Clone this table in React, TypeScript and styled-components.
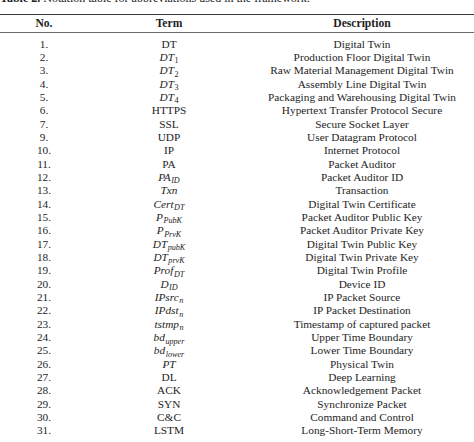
import React from 'react';
import styled, { createGlobalStyle } from 'styled-components';

const GlobalStyle = createGlobalStyle`
	html, body {
		margin: 0;
		padding: 0;
		background: #ffffff;
	}
	body {
		font-family: "Liberation Serif", "DejaVu Serif", serif;
		color: #1e1e1e;
		overflow: hidden;
	}
`;

const Page = styled.div`
	width: 474px;
	height: 442px;
	overflow: hidden;
`;

const Caption = styled.p`
	margin: -9px 0 0 0;
	height: 14px;
	font-size: 12px;
	line-height: 14px;
	white-space: nowrap;
	b {
		font-weight: bold;
	}
`;

const Table = styled.section`
	display: flex;
	flex-flow: column;
	width: 474px;
	margin-top: 9px;
	font-size: 11.3px;
`;

const HeadRow = styled.div`
	display: grid;
	grid-template-columns: 88px 162px 1fr;
	align-items: center;
	height: 17px;
	border-top: 1.5px solid #3a3a3a;
	border-bottom: 1px solid #6a6a6a;
	font-size: 11.6px;
	font-weight: bold;
	text-align: center;
`;

const Body = styled.div`
	display: flex;
	flex-flow: column;
	padding-top: 4.5px;
`;

const BodyRow = styled.div`
	display: grid;
	grid-template-columns: 88px 162px 1fr;
	height: 13.35px;
	line-height: 13.35px;
	text-align: center;
	white-space: nowrap;
`;

const Math = styled.i`
	font-style: italic;
`;

const Sub = styled.span<{ $roman?: boolean }>`
	font-size: 0.72em;
	line-height: 0;
	font-style: ${(p) => (p.$roman ? 'normal' : 'italic')};
	position: relative;
	top: 0.3em;
	margin-left: 0.5px;
`;

type Row = {
	no: string;
	term: React.ReactNode;
	desc: string;
};

const m = (base: string, sub?: string, roman?: boolean) => (
	<Math>
		{base}
		{sub && <Sub $roman={roman}>{sub}</Sub>}
	</Math>
);

const rows: Row[] = [
	{ no: '1.', term: 'DT', desc: 'Digital Twin' },
	{ no: '2.', term: m('DT', '1', true), desc: 'Production Floor Digital Twin' },
	{ no: '3.', term: m('DT', '2', true), desc: 'Raw Material Management Digital Twin' },
	{ no: '4.', term: m('DT', '3', true), desc: 'Assembly Line Digital Twin' },
	{ no: '5.', term: m('DT', '4', true), desc: 'Packaging and Warehousing Digital Twin' },
	{ no: '6.', term: 'HTTPS', desc: 'Hypertext Transfer Protocol Secure' },
	{ no: '7.', term: 'SSL', desc: 'Secure Socket Layer' },
	{ no: '9.', term: 'UDP', desc: 'User Datagram Protocol' },
	{ no: '10.', term: 'IP', desc: 'Internet Protocol' },
	{ no: '11.', term: 'PA', desc: 'Packet Auditor' },
	{ no: '12.', term: m('PA', 'ID'), desc: 'Packet Auditor ID' },
	{ no: '13.', term: m('Txn'), desc: 'Transaction' },
	{ no: '14.', term: m('Cert', 'DT'), desc: 'Digital Twin Certificate' },
	{ no: '15.', term: m('P', 'PubK'), desc: 'Packet Auditor Public Key' },
	{ no: '16.', term: m('P', 'PrvK'), desc: 'Packet Auditor Private Key' },
	{ no: '17.', term: m('DT', 'pubK'), desc: 'Digital Twin Public Key' },
	{ no: '18.', term: m('DT', 'prvK'), desc: 'Digital Twin Private Key' },
	{ no: '19.', term: m('Prof', 'DT'), desc: 'Digital Twin Profile' },
	{ no: '20.', term: m('D', 'ID'), desc: 'Device ID' },
	{ no: '21.', term: m('IPsrc', 'n'), desc: 'IP Packet Source' },
	{ no: '22.', term: m('IPdst', 'n'), desc: 'IP Packet Destination' },
	{ no: '23.', term: m('tstmp', 'n'), desc: 'Timestamp of captured packet' },
	{ no: '24.', term: m('bd', 'upper'), desc: 'Upper Time Boundary' },
	{ no: '25.', term: m('bd', 'lower'), desc: 'Lower Time Boundary' },
	{ no: '26.', term: m('PT'), desc: 'Physical Twin' },
	{ no: '27.', term: 'DL', desc: 'Deep Learning' },
	{ no: '28.', term: 'ACK', desc: 'Acknowledgement Packet' },
	{ no: '29.', term: 'SYN', desc: 'Synchronize Packet' },
	{ no: '30.', term: 'C&C', desc: 'Command and Control' },
	{ no: '31.', term: 'LSTM', desc: 'Long-Short-Term Memory' },
];

export default function App() {
	return (
		<Page>
			<GlobalStyle />
			<Caption>
				<b>Table 2.</b> Notation table for abbreviations used in the framework.
			</Caption>
			<Table>
				<HeadRow>
					<div>No.</div>
					<div>Term</div>
					<div>Description</div>
				</HeadRow>
				<Body>
					{rows.map((row) => (
						<BodyRow key={`row_${row.no}`}>
							<div>{row.no}</div>
							<div>{row.term}</div>
							<div>{row.desc}</div>
						</BodyRow>
					))}
				</Body>
			</Table>
		</Page>
	);
}
